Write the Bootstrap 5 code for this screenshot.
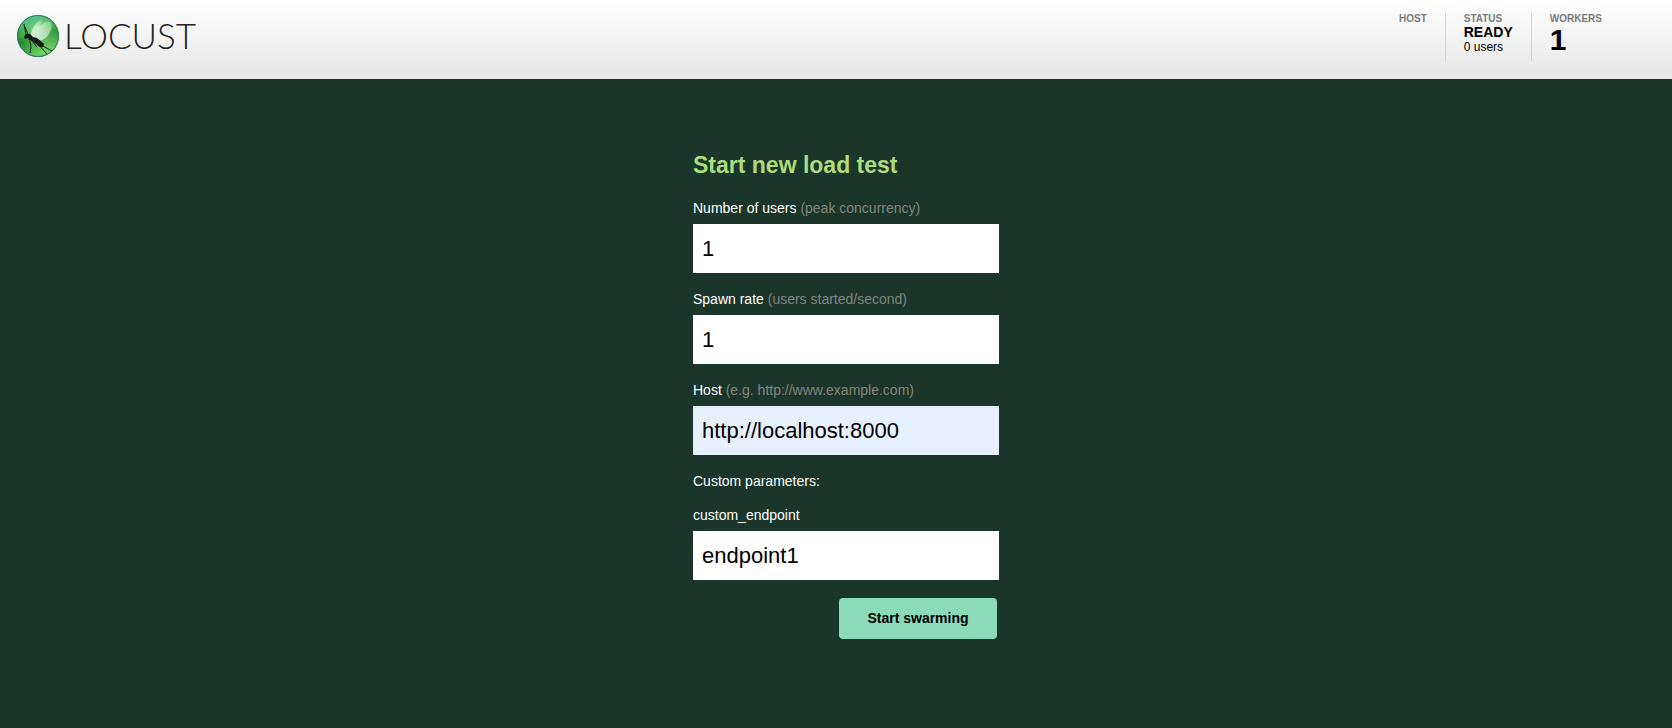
<!DOCTYPE html>
<html lang="en">
<head>
<meta charset="utf-8">
<meta name="viewport" content="width=device-width, initial-scale=1">
<title>Locust</title>
<link href="https://cdn.jsdelivr.net/npm/bootstrap@5.3.0/dist/css/bootstrap.min.css" rel="stylesheet">
<style>
  body { background: #1a352a; color: #fff; font: 14px/16px "Liberation Sans", Arial, sans-serif; }
  .top-bar { background: linear-gradient(#fff, #e6e6e6); color: #000; padding: 13px 70px 18px 16px; }
  .wordmark { font-family: Lato, sans-serif; font-weight: 300; font-size: 35px; line-height: 44px; color: #222; }
  .stat { min-height: 48px; padding: 0 18px; border-left: 1px solid #d2d4d6; }
  .stat:first-child { border-left: 0; }
  .stat:last-child { padding-right: 0; }
  .stat-label { font-size: 10px; line-height: 12px; font-weight: bold; color: #7b7b7b; }
  .stat-state { font-size: 14px; line-height: 15px; font-weight: bold; }
  .stat-users { font-size: 12px; line-height: 14px; }
  .stat-count { font-size: 30px; line-height: 30px; font-weight: bold; }
  .start-box { max-width: 326px; padding: 70px 0 32px 20px; }
  h1 { font-size: 23px; line-height: 32px; font-weight: bold; color: #addd7b; margin-bottom: 19px; }
  .form-label { display: block; margin-bottom: 8px; }
  .hint { color: #84857f; }
  .form-control, .form-control:focus { height: 49px; padding: 0 9px; border: 0; border-radius: 0; background: #fff; color: #000; font-size: 22px; line-height: 48px; }
  .form-control.filled { background: #e8effd; }
  .field { margin-bottom: 18px; }
  .btn-swarm, .btn-swarm:hover { width: 158px; height: 41px; padding: 0; border: 0; border-radius: 4px; background: #8bdab9; color: #000; font-size: 14px; font-weight: bold; margin-right: 2px; }
</style>
</head>
<body>
<header class="top-bar d-flex justify-content-between align-items-start">
  <a href="#" class="d-flex align-items-start text-decoration-none" aria-label="Locust">
    <svg width="44" height="48" viewBox="0 0 44 48" aria-hidden="true">
      <defs>
        <radialGradient id="orb" cx=".55" cy=".45" r=".6">
          <stop offset="0" stop-color="#c9efc4"/><stop offset=".4" stop-color="#72c86c"/><stop offset=".75" stop-color="#35a235"/><stop offset="1" stop-color="#147346"/>
        </radialGradient>
        <linearGradient id="sky" x1="0" y1="0" x2=".35" y2="1">
          <stop offset="0" stop-color="#63cfd5" stop-opacity=".9"/><stop offset=".4" stop-color="#6dcf9f" stop-opacity=".2"/><stop offset=".6" stop-color="#0b711d" stop-opacity=".4"/><stop offset="1" stop-color="#8ff07c" stop-opacity=".65"/>
        </linearGradient>
        <linearGradient id="wing" x1="0" y1="1" x2="1" y2="0">
          <stop offset="0" stop-color="#fff" stop-opacity=".75"/><stop offset="1" stop-color="#e4ffe4" stop-opacity=".35"/>
        </linearGradient>
      </defs>
      <circle cx="22" cy="23" r="21" fill="url(#orb)"/>
      <circle cx="22" cy="23" r="20.5" fill="url(#sky)" stroke="#277e66"/>
      <path d="M15 22C16 15 20 8 26 7c0 5-5 10-9 16z" fill="url(#wing)"/>
      <path d="M16 24C21 14 29 7 34 9c4 5-1 15-8 18-4 1-7 0-10-3z" fill="url(#wing)"/>
      <path d="M8 24c1-3 3-4 6-3l3 3 4 1 7 6-1 3-3 0-8-6-3-1-1-2-3 1z" fill="#101c15"/>
      <path d="M10 22L8 11M12 21L9 14M14 28l1 6-1 6M21 30l10 11M25 32l11 6M16 28l5 6" fill="none" stroke="#14241a" stroke-width="1"/>
    </svg>
    <span class="wordmark ms-1">LOCUST</span>
  </a>
  <div class="d-flex">
    <div class="stat"><div class="stat-label">HOST</div></div>
    <div class="stat">
      <div class="stat-label">STATUS</div>
      <div class="stat-state">READY</div>
      <div class="stat-users">0 users</div>
    </div>
    <div class="stat">
      <div class="stat-label">WORKERS</div>
      <div class="stat-count">1</div>
    </div>
  </div>
</header>
<main class="start-box mx-auto">
  <h1>Start new load test</h1>
  <form>
    <div class="field">
      <label class="form-label" for="users">Number of users <span class="hint">(peak concurrency)</span></label>
      <input class="form-control" id="users" type="text" value="1">
    </div>
    <div class="field">
      <label class="form-label" for="rate">Spawn rate <span class="hint">(users started/second)</span></label>
      <input class="form-control" id="rate" type="text" value="1">
    </div>
    <div class="field">
      <label class="form-label" for="host">Host <span class="hint">(e.g. http://www.example.com)</span></label>
      <input class="form-control filled" id="host" type="text" value="http://localhost:8000">
    </div>
    <p class="field">Custom parameters:</p>
    <div class="field">
      <label class="form-label" for="endpoint">custom_endpoint</label>
      <input class="form-control" id="endpoint" type="text" value="endpoint1">
    </div>
    <div class="d-flex justify-content-end"><button type="button" class="btn btn-swarm">Start swarming</button></div>
  </form>
</main>
<script src="https://cdn.jsdelivr.net/npm/bootstrap@5.3.0/dist/js/bootstrap.bundle.min.js"></script>
</body>
</html>
